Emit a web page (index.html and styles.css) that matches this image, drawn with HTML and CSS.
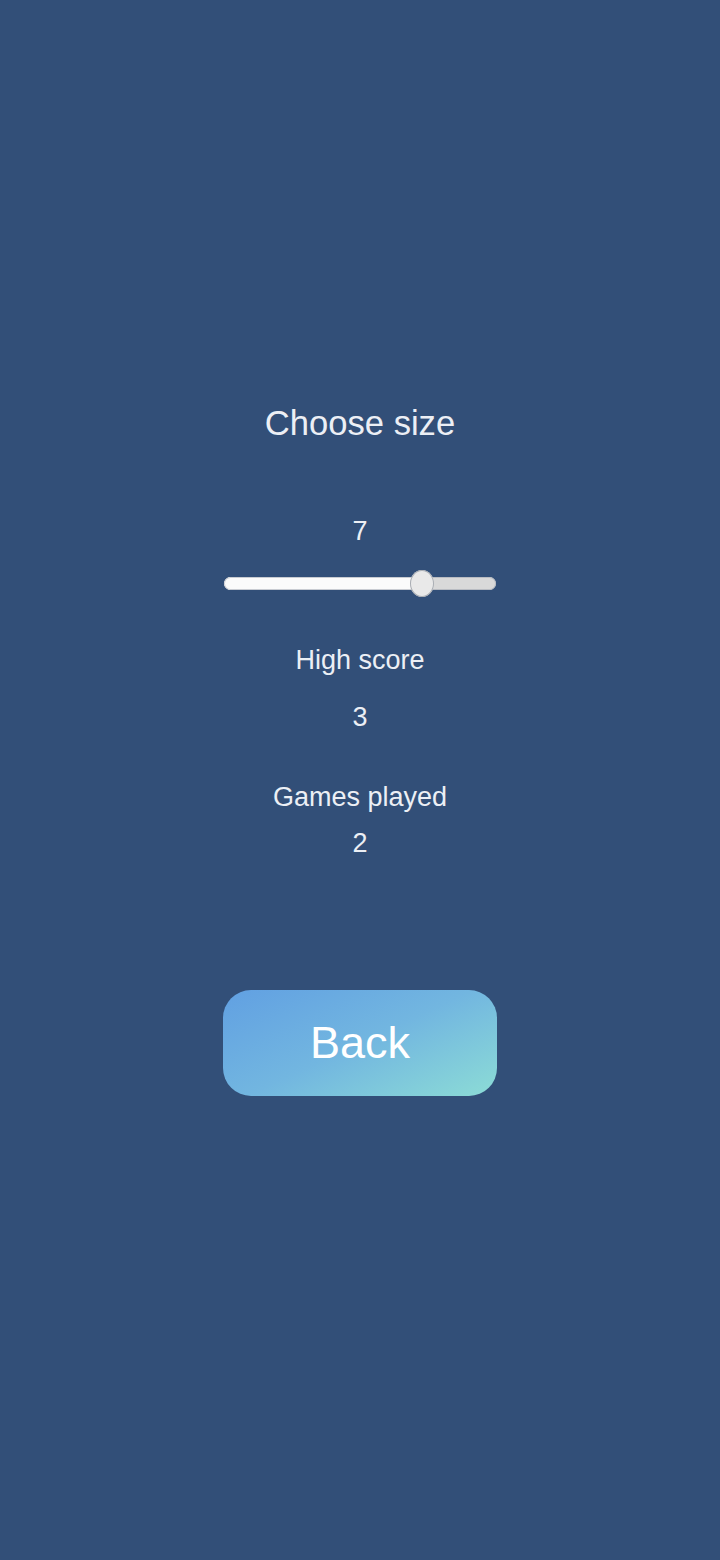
FILE: index.html
```html
<!DOCTYPE html>
<html>
<head>
<meta charset="utf-8">
<link rel="stylesheet" href="styles.css">
</head>
<body>
<main class="menu">
  <div class="title">Choose size</div>
  <div class="value size-value">7</div>
  <div class="slider">
    <div class="track">
      <div class="fill" style="width: 72.7%"></div>
    </div>
    <div class="knob" style="left: 72.7%"></div>
  </div>
  <div class="label high-label">High score</div>
  <div class="value high-value">3</div>
  <div class="label games-label">Games played</div>
  <div class="value games-value">2</div>
  <button class="back">Back</button>
</main>
</body>
</html>
```

FILE: styles.css
```css
html, body {
  margin: 0;
  padding: 0;
  background: #324f78;
}
body {
  width: 720px;
  height: 1560px;
  font-family: "Liberation Sans", Arial, sans-serif;
  color: #eceff5;
}
.menu {
  display: flex;
  flex-direction: column;
  align-items: center;
  padding-top: 403px;
}
.title {
  font-size: 34.6px;
  line-height: 40px;
  height: 40px;
}
.value, .label {
  font-size: 27px;
  line-height: 32px;
  height: 32px;
}
.size-value { margin-top: 72px; }
.slider {
  position: relative;
  width: 272px;
  height: 28px;
  margin-top: 22px;
  display: flex;
  align-items: center;
}
.track {
  width: 100%;
  height: 13px;
  border-radius: 7px;
  background: #d9d9d9;
  box-shadow: inset 0 0 0 1px #b9bcc2;
  overflow: hidden;
  display: flex;
}
.fill {
  height: 100%;
  background: #fbfbfb;
  border-radius: 7px 0 0 7px;
  box-shadow: inset 0 0 0 1px #c9ccd2;
}
.knob {
  position: absolute;
  top: 1px;
  width: 24px;
  height: 27px;
  margin-left: -12px;
  border-radius: 50%;
  background: #e9e9e9;
  box-shadow: inset 0 0 0 1px #a9adb3;
}
.high-label { margin-top: 47px; }
.high-value { margin-top: 25px; }
.games-label { margin-top: 48px; }
.games-value { margin-top: 14px; }
.back {
  margin-top: 131px;
  width: 274px;
  height: 106px;
  border: none;
  border-radius: 28px;
  background: linear-gradient(155deg, #61a0e2 0%, #72b6e0 50%, #8cdcd6 100%);
  color: #ffffff;
  font-family: "Liberation Sans", Arial, sans-serif;
  font-size: 45px;
  padding: 0;
}
```
